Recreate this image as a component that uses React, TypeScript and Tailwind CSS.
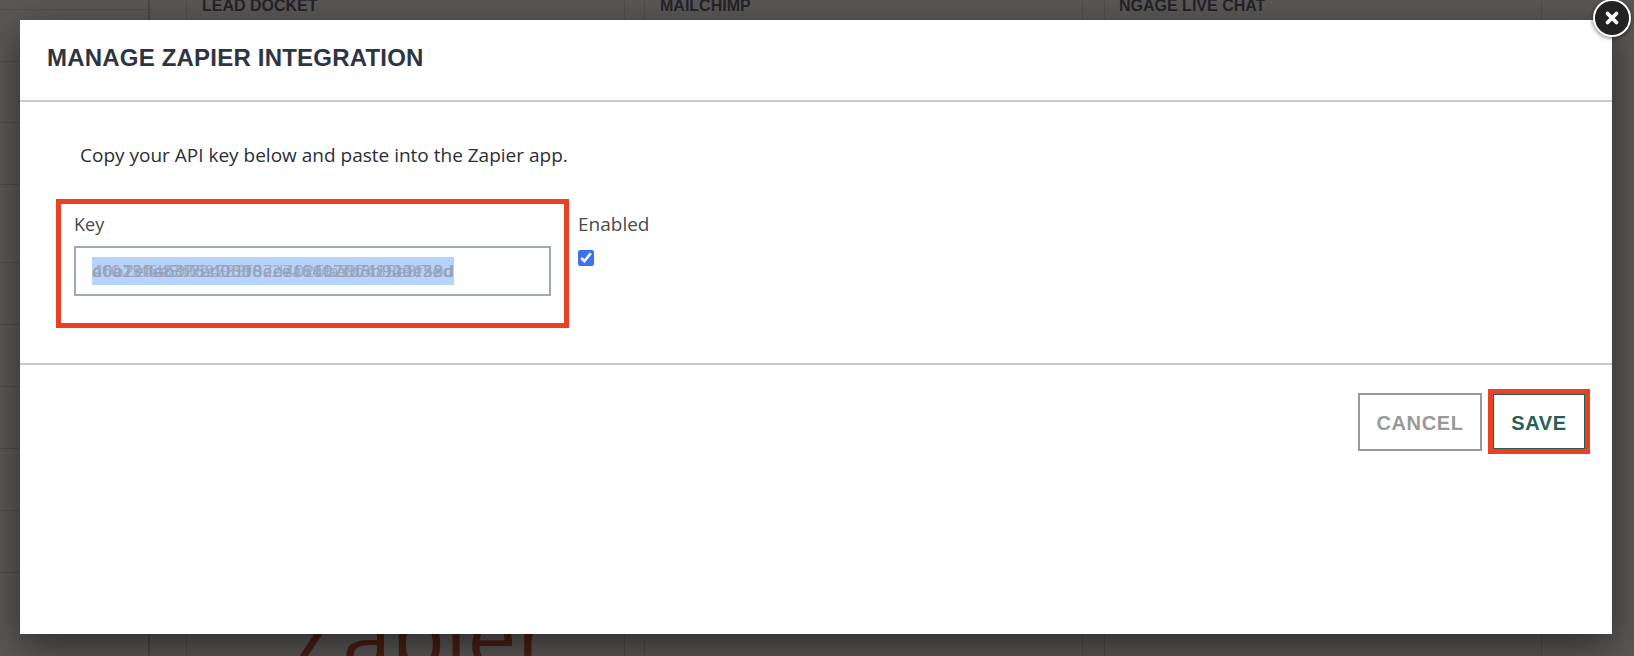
const bodyFont = "font-['Open_Sans','Lato',sans-serif]";
const headFont = "font-['Liberation_Sans',Arial,sans-serif]";

const sidebarRows = [10, 52, 61, 62, 78, 62, 62, 62, 62, 62];

const keyLayers = [
  'c1023f6a5b7e40d98c2ea6107fd3b94e1a2d',
  'd0b2e4a6905c7f318ed4026ba97c15e8f39d',
  '40a7c1e83f62d95b07ce184fa3d6b920c7ed',
  'a6e1904bc7d2583f0ae7c1692db48f03e58d',
];

function PageBehind() {
  return (
    <div className="flex h-full bg-[#5a5856]">
      <div className="flex w-[150px] shrink-0 flex-col border-r-2 border-[#4a4846]">
        {sidebarRows.map((h, i) => (
          <div key={i} className="shrink-0 border-b border-[#4f4d4b]" style={{ height: h }} />
        ))}
      </div>
      <div className="w-[37px] shrink-0 border-r border-[#504e4c]" />
      <div className="relative w-[438px] shrink-0 border-r border-[#504e4c] pl-[15px]">
        <p className={`${headFont} -mt-[3px] text-[16px] leading-[18px] font-bold text-[#25232a]`}>LEAD DOCKET</p>
        <p className={`${bodyFont} absolute top-[586px] left-[105px] text-[88px] leading-[96px] text-[#4a1f12]`}>Zapier</p>
      </div>
      <div className="w-[20px] shrink-0 border-r border-[#504e4c]" />
      <div className="w-[438px] shrink-0 border-r border-[#504e4c] pl-[15px]">
        <p className={`${headFont} -mt-[3px] text-[16px] leading-[18px] font-bold text-[#25232a]`}>MAILCHIMP</p>
      </div>
      <div className="w-[22px] shrink-0 border-r border-[#504e4c]" />
      <div className="w-[437px] shrink-0 border-r border-[#504e4c] pl-[14px]">
        <p className={`${headFont} -mt-[3px] text-[16px] leading-[18px] font-bold text-[#25232a]`}>NGAGE LIVE CHAT</p>
      </div>
    </div>
  );
}

function CloseButton() {
  return (
    <div className="absolute -top-[21px] -right-[19px] flex h-[38px] w-[38px] items-center justify-center rounded-full border-2 border-white bg-[#222222] shadow-[0_1px_4px_rgba(0,0,0,0.6)]">
      <svg width="16" height="16" viewBox="0 0 16 16">
        <path d="M3.5 3.5l9 9M12.5 3.5l-9 9" stroke="#ffffff" strokeWidth="3.8" strokeLinecap="round" />
      </svg>
    </div>
  );
}

export default function App() {
  return (
    <div className="relative h-[656px] w-[1634px] overflow-hidden">
      <PageBehind />

      <div className="absolute top-[20px] left-[20px] flex h-[614px] w-[1592px] flex-col bg-white shadow-[0_12px_36px_rgba(0,0,0,0.5)]">
        <CloseButton />

        <div className="flex h-[82px] shrink-0 items-center border-b-2 border-[#c9c9c9] pb-[5px] pl-[27px]">
          <h1 className={`${headFont} text-[24px] font-bold tracking-[0.2px] text-[#2d3444]`}>MANAGE ZAPIER INTEGRATION</h1>
        </div>

        <div className="h-[263px] shrink-0 border-b-2 border-[#c9c9c9] pt-[40px] pl-[36px]">
          <p className={`${bodyFont} pl-[24px] text-[19px] leading-[26px] text-[#2b2f38]`}>
            Copy your API key below and paste into the Zapier app.
          </p>

          <div className="mt-[31px] flex">
            <div className="h-[129px] w-[513px] border-[5px] border-[#eb4023] pt-[8px] pl-[13px]">
              <label className={`${bodyFont} block text-[18px] leading-[24px] text-[#4a4a4a]`}>Key</label>
              <div className="mt-[10px] flex h-[50px] w-[477px] items-center border-2 border-[#a0a8ba] pl-[16px]">
                <div className="relative h-[28px] w-[362px] overflow-hidden bg-[#b5d3fb]">
                  {keyLayers.map((k, i) => (
                    <span
                      key={i}
                      className={`${bodyFont} absolute top-0 left-0 text-[17px] leading-[28px] tracking-[0.6px] whitespace-nowrap text-[#9a9fb4]/80`}
                    >
                      {k}
                    </span>
                  ))}
                </div>
              </div>
            </div>

            <div className="pt-[13px] pl-[9px]">
              <label className={`${bodyFont} block text-[19px] leading-[24px] text-[#4a4a4a]`}>Enabled</label>
              <input type="checkbox" checked readOnly className="mt-[14px] block h-4 w-4 accent-[#3b74ee]" />
            </div>
          </div>
        </div>

        <div className="flex items-start justify-end pt-[24px] pr-[22px]">
          <button className={`${headFont} mt-[4px] h-[58px] w-[124px] border-2 border-[#999999] pt-[2px] text-[20px] font-bold tracking-[0.6px] text-[#999999]`}>
            CANCEL
          </button>
          <div className="ml-[6px] h-[65px] w-[102px] border-[5px] border-[#eb4023]">
            <button className={`${headFont} h-full w-full border border-[#275e56] pt-[2px] text-[20px] font-bold tracking-[0.6px] text-[#275e56]`}>
              SAVE
            </button>
          </div>
        </div>
      </div>
    </div>
  );
}
